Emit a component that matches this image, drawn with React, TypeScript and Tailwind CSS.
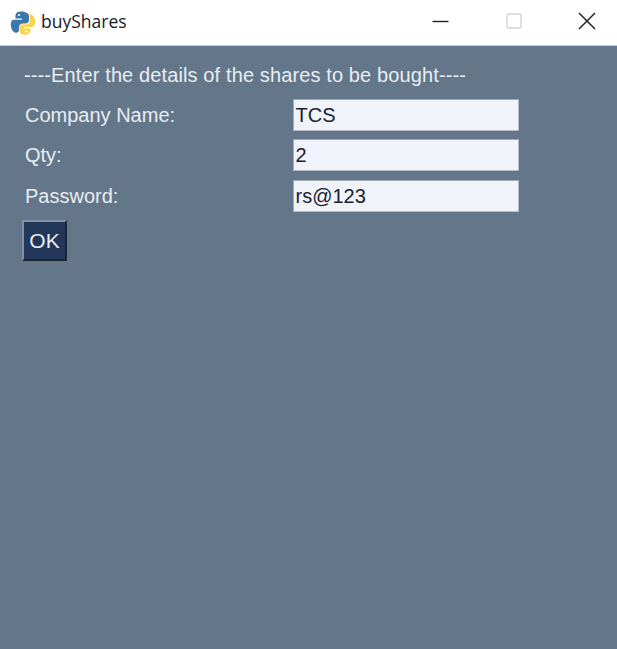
function Logo() {
  return (
    <svg width="26" height="26" viewBox="0 0 26 26" className="shrink-0">
      <path d="M11 1.500C7.500 1.500 5.500 3 5.500 5.500V8.500h6.500v1.200H4C1.800 9.700 0.800 11.500 0.800 14.500c0 3.500 1.500 7 4 8 2 .8 4-.2 4.200-2.500v-2.500c0-2.500 1.800-4 4-4h2.500c2 0 3.500-1.400 3.500-3.200V6C19 3 15 1.500 11 1.500z" fill="#3a77ab" />
      <path d="M18 3.500c3.500 0 7.200 3 7.200 8 0 3.500-1.500 5.500-3.700 5.500H14v1.300h6.500V21c0 2.500-2.500 3.800-5.500 3.800-3.500 0-5.500-1.400-5.500-3.800v-3c0-2.300 1.700-3.800 3.500-3.800h3.500c2 0 3.500-1.500 3.500-3.500V7C20 5 19.500 3.800 18 3.500z" fill="#fdd44f" />
      <circle cx="9" cy="5" r="1.100" fill="#fff" />
      <circle cx="16.500" cy="21.500" r="1.100" fill="#fff" />
    </svg>
  );
}

function Row({ label, value }: { label: string; value: string }) {
  return (
    <div className="flex items-center h-[31px] mb-[9.500px]">
      <label className="w-[271px] pl-[3px] text-[20px] leading-none text-[#e8edf2] font-['Liberation_Sans',sans-serif]">{label}</label>
      <div className="w-[226px] h-[32px] bg-[#f0f3f9] border-[1.500px] border-t-[#a3a8ad] border-l-[#a3a8ad] border-r-[#b9bdc2] border-b-[#b9bdc2] flex items-center pl-[1.500px] text-[20px] text-[#1a2230] font-['Liberation_Sans',sans-serif]">
        {value}
      </div>
    </div>
  );
}

export default function App() {
  return (
    <div className="w-[617px] h-[649px] flex flex-col bg-[#64768a] overflow-hidden">
      <header className="h-[46px] bg-white flex items-center shrink-0 border-b border-[#c4ccd5]">
        <div className="ml-[10px] mr-[5px]"><Logo /></div>
        <span className="mb-[2px] text-[17.500px] text-[#16202c] font-['Open_Sans',sans-serif]">buyShares</span>
        <div className="ml-auto mb-[3px] flex items-center">
          <svg width="18" height="18" viewBox="0 0 18 18" className="mr-[54.500px]"><path d="M0.500 9.500H16.500" stroke="#222" strokeWidth="1.400" /></svg>
          <svg width="18" height="18" viewBox="0 0 18 18" className="mr-[54.500px]"><rect x="2" y="2" width="14" height="14" rx="1.500" fill="none" stroke="#d4d4d4" strokeWidth="1.400" /></svg>
          <svg width="20" height="20" viewBox="0 0 20 20" className="mr-[20px]"><path d="M2 2L18 18M18 2L2 18" stroke="#222" strokeWidth="1.500" /></svg>
        </div>
      </header>
      <main className="pl-[22px] pt-[17px]">
        <p className="pl-[2px] h-[36px] text-[20px] leading-[24px] tracking-[0.12px] text-[#e8edf2] font-['Liberation_Sans',sans-serif]">----Enter the details of the shares to be bought----</p>
        <Row label="Company Name:" value="TCS" />
        <Row label="Qty:" value="2" />
        <Row label="Password:" value="rs@123" />
        <button className="block w-[45px] h-[41px] -mt-[0.500px] bg-[#223759] border-2 border-t-[#8291a3] border-l-[#8291a3] border-r-[#1c2430] border-b-[#1c2430] text-[21px] leading-none text-[#e8edf2] font-['Liberation_Sans',sans-serif]">OK</button>
      </main>
    </div>
  );
}
